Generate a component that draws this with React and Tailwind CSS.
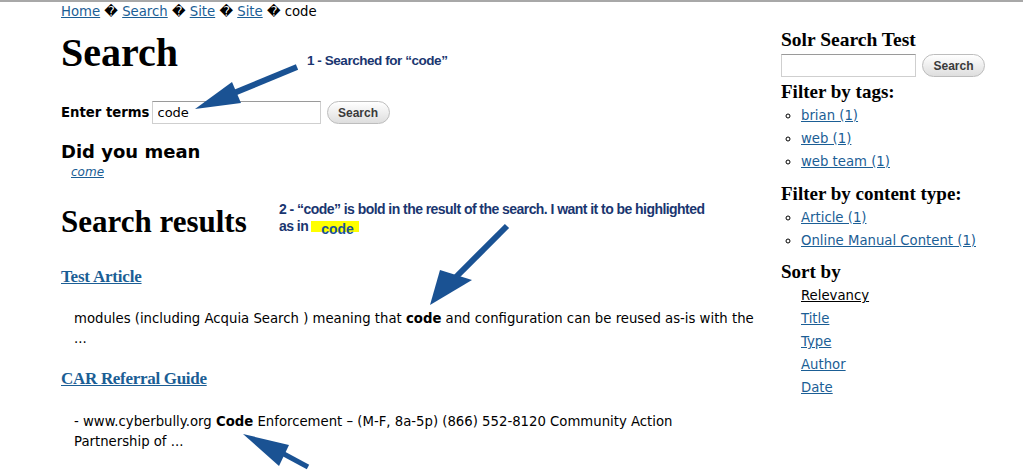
import React from "react";

const LINK = "text-[#1b5e95] underline";
const SERIF = "font-['Liberation_Serif',serif] font-bold text-black";
const NOTE = "font-['Liberation_Sans',sans-serif] font-bold text-[#1a3670]";

const TAGS = ["brian (1)", "web (1)", "web team (1)"];
const TYPES = ["Article (1)", "Online Manual Content (1)"];
const SORTS = ["Relevancy", "Title", "Type", "Author", "Date"];

function SearchButton() {
  return (
    <button className="h-[23px] w-[63px] rounded-full border border-[#bdbdbd] bg-gradient-to-b from-white to-[#dedede] font-['Liberation_Sans',sans-serif] text-[12px] font-bold text-[#3a3a3a]">
      Search
    </button>
  );
}

function Arrows() {
  return (
    <svg className="pointer-events-none absolute inset-0" width="1023" height="471">
      <g fill="#1a5293" stroke="#1a5293">
        {/* 1 - input */}
        <line x1="297" y1="65" x2="234" y2="91" strokeWidth="6" />
        <polygon points="195,107 232,80 241,101" strokeWidth="0" />
        {/* 2 - result */}
        <line x1="507" y1="224" x2="454" y2="277" strokeWidth="6" />
        <polygon points="430,303 440,268 472,278" strokeWidth="0" />
        {/* 3 - second result */}
        <line x1="308" y1="465" x2="282" y2="451" strokeWidth="5" />
        <polygon points="243,432 289,443 279,464" strokeWidth="0" />
      </g>
    </svg>
  );
}

export default function App() {
  return (
    <div className="relative h-[471px] w-[1023px] overflow-hidden border-t-2 border-[#a8a8a8] bg-white font-['DejaVu_Sans',Verdana,sans-serif] text-[13.25px] text-black">
      <div className="flex pl-[61px]">
        {/* Main column */}
        <div className="w-[720px]">
          <div className="mt-px h-[18px] leading-[18px]">
            <a className={LINK}>Home</a> {"\uFFFD"} <a className={LINK}>Search</a> {"\uFFFD"}{" "}
            <a className={LINK}>Site</a> {"\uFFFD"} <a className={LINK}>Site</a> {"\uFFFD"} code
          </div>

          <h1 className={`${SERIF} mt-[12px] text-[40px] leading-[40px]`}>Search</h1>

          <div className="mt-[28px] flex items-center gap-[2px]">
            <label className="font-bold">Enter terms</label>
            <input
              defaultValue="code"
              className="h-[23px] w-[169px] border border-[#cfcfcf] border-t-[#9a9a9a] px-[5px] text-[13px] outline-none"
            />
            <div className="ml-[4px]">
              <SearchButton />
            </div>
          </div>

          <h2 className="mt-[17px] text-[18px] font-bold leading-[22px]">Did you mean</h2>
          <div className="pl-[10px] leading-[18px]">
            <a className={`${LINK} text-[12px] italic`}>come</a>
          </div>

          <h2 className={`${SERIF} mt-[26px] text-[31px] leading-[30px]`}>Search results</h2>

          <h3 className={`${SERIF} mt-[30px] text-[17px] leading-[20px] tracking-[-0.2px]`}>
            <a className="text-[#1b5e95] underline">Test Article</a>
          </h3>
          <p className="mt-[22px] whitespace-nowrap pl-[13px] leading-[20px]">
            modules (including Acquia Search ) meaning that <b>code</b> and configuration can be reused as-is with the
            <br />
            ...
          </p>

          <h3 className={`${SERIF} mt-[20px] text-[17px] leading-[20px] tracking-[-0.3px]`}>
            <a className="text-[#1b5e95] underline">CAR Referral Guide</a>
          </h3>
          <p className="mt-[23px] whitespace-nowrap pl-[13px] leading-[20px]">
            - www.cyberbully.org <b>Code</b> Enforcement – (M-F, 8a-5p) (866) 552-8120 Community Action
            <br />
            Partnership of ...
          </p>
        </div>

        {/* Sidebar */}
        <aside className="w-[220px]">
          <h2 className={`${SERIF} mt-[27px] text-[19.5px] leading-[22px]`}>Solr Search Test</h2>
          <div className="mt-[3px] flex items-center gap-[6px]">
            <input className="h-[23px] w-[135px] border border-[#cfcfcf] border-t-[#9a9a9a] outline-none" />
            <SearchButton />
          </div>

          <h2 className={`${SERIF} mt-[4px] text-[19px] leading-[22px]`}>Filter by tags:</h2>
          <ul className="mt-px list-[circle] pl-[20px]">
            {TAGS.map((t) => (
              <li key={t} className="h-[23px] leading-[23px]">
                <a className={LINK}>{t}</a>
              </li>
            ))}
          </ul>

          <h2 className={`${SERIF} mt-[10px] text-[19px] leading-[22px]`}>Filter by content type:</h2>
          <ul className="mt-px list-[circle] pl-[20px]">
            {TYPES.map((t) => (
              <li key={t} className="h-[23px] leading-[23px]">
                <a className={LINK}>{t}</a>
              </li>
            ))}
          </ul>

          <h2 className={`${SERIF} mt-[9px] text-[19px] leading-[22px]`}>Sort by</h2>
          <ul className="mt-px pl-[20px]">
            {SORTS.map((s, i) => (
              <li key={s} className="h-[23px] leading-[23px]">
                <a className={i === 0 ? "text-black underline" : LINK}>{s}</a>
              </li>
            ))}
          </ul>
        </aside>
      </div>

      {/* Annotations */}
      <div className={`${NOTE} absolute left-[307px] top-[50px] text-[13.5px] leading-[17px] tracking-[-0.45px]`}>
        1 - Searched for “code”
      </div>
      <div className={`${NOTE} absolute left-[279px] top-[199px] text-[14px] leading-[17px] tracking-[-0.55px]`}>
        2 - “code” is bold in the result of the search. I want it to be highlighted
        <br />
        as in
        <span className="ml-[3px] inline-block h-[11px] w-[48px] bg-[#ffff00] pl-[10px] align-[-3px] leading-[16px] tracking-normal text-[#1a5293]">
          code
        </span>
      </div>
      <Arrows />
    </div>
  );
}
